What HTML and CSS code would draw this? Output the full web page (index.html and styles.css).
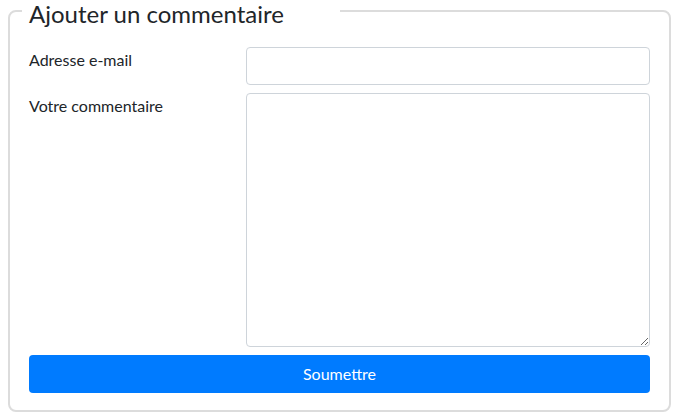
FILE: index.html
```html
<!DOCTYPE html>
<html lang="fr">
<head>
<meta charset="utf-8">
<title>Ajouter un commentaire</title>
<link rel="stylesheet" href="styles.css">
</head>
<body>
<div class="page">
  <form class="comment-form">
    <fieldset class="box">
      <legend class="box-title">Ajouter un commentaire</legend>
      <div class="form-row">
        <label class="form-label" for="email">Adresse e-mail</label>
        <input class="form-input" id="email" type="email">
      </div>
      <div class="form-row">
        <label class="form-label" for="comment">Votre commentaire</label>
        <textarea class="form-textarea" id="comment"></textarea>
      </div>
      <button class="submit-btn" type="button">Soumettre</button>
    </fieldset>
  </form>
</div>
</body>
</html>
```

FILE: styles.css
```css
* {
  box-sizing: border-box;
}

html, body {
  margin: 0;
  padding: 0;
  background: #ffffff;
}

body {
  font-family: "Lato", "Open Sans", sans-serif;
  font-size: 16px;
  line-height: 1.5;
  color: #212529;
}

.page {
  padding: 0 5px 0 8px;
}

.comment-form {
  margin: 0;
}

.box {
  margin: 0;
  min-width: 0;
  border: 2px solid #dcdcdc;
  border-radius: 8px;
  padding: 25px 19px 17px;
}

.box-title {
  width: 318px;
  margin-left: -7px;
  padding: 6px 0 0 7px;
  font-size: 24px;
  line-height: 16px;
  font-weight: 400;
  color: #212529;
}

.form-row {
  display: grid;
  grid-template-columns: 187px 1fr;
  column-gap: 30px;
  margin-bottom: 8px;
}

.form-label {
  font-size: 16px;
  line-height: 24px;
  padding-top: 1px;
}

.form-input,
.form-textarea {
  display: block;
  width: 100%;
  border: 1px solid #ced4da;
  border-radius: 4px;
  background: #fff;
  font: inherit;
  color: #495057;
  padding: 6px 12px;
  margin: 0;
}

.form-input {
  height: 38px;
}

.form-textarea {
  height: 254px;
  resize: vertical;
}

.submit-btn {
  display: block;
  width: 100%;
  height: 38px;
  border: none;
  border-radius: 4px;
  background: #007bff;
  color: #ffffff;
  font: inherit;
  font-size: 16px;
  line-height: 24px;
  padding: 0;
  margin: 0;
  cursor: pointer;
}
```
